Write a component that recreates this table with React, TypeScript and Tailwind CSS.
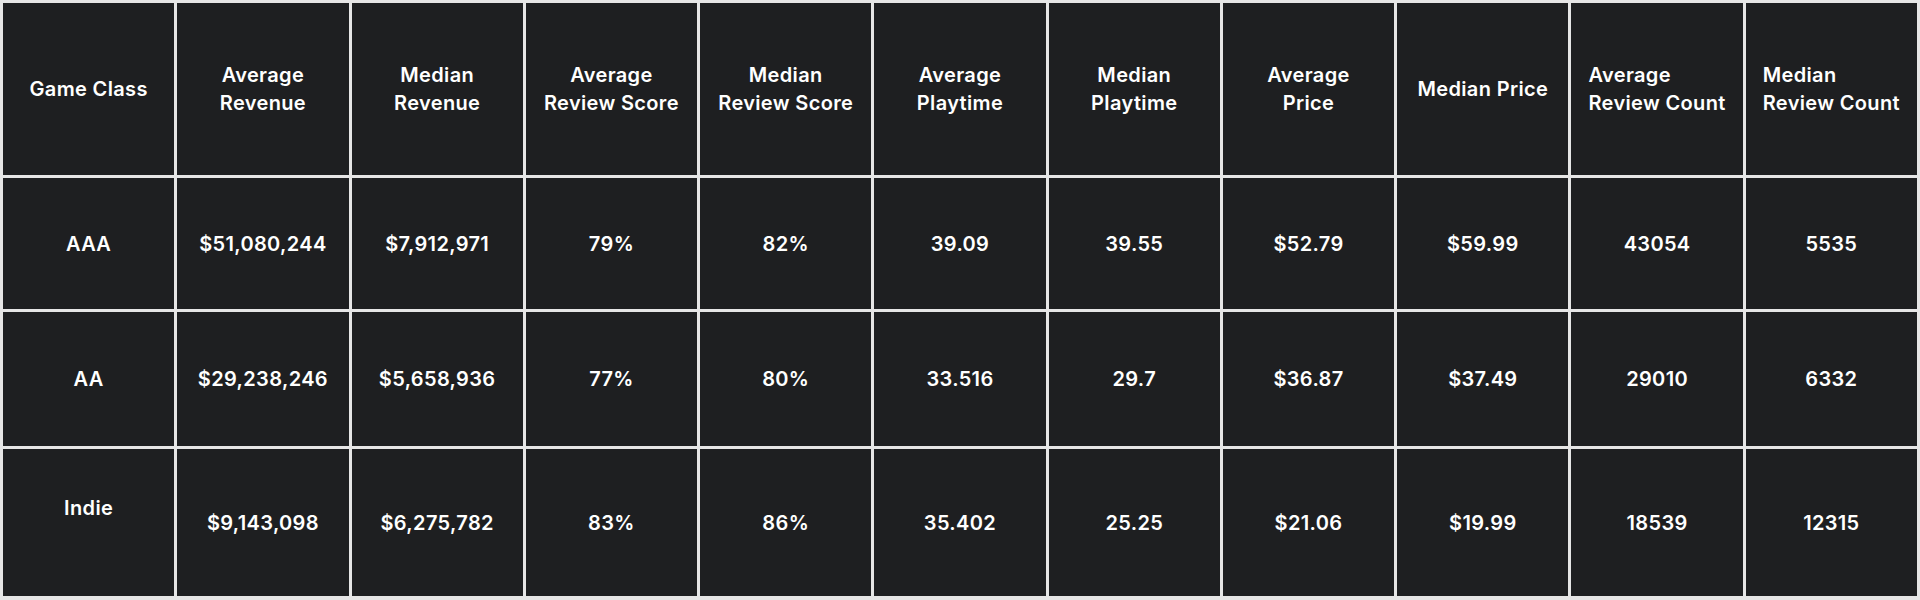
const HEADERS: { label: string; left?: boolean }[] = [
  { label: "Game Class" },
  { label: "Average Revenue" },
  { label: "Median Revenue" },
  { label: "Average Review Score" },
  { label: "Median Review Score" },
  { label: "Average Playtime" },
  { label: "Median Playtime" },
  { label: "Average Price" },
  { label: "Median Price" },
  { label: "Average Review Count", left: true },
  { label: "Median Review Count", left: true },
];

const ROWS: string[][] = [
  ["AAA", "$51,080,244", "$7,912,971", "79%", "82%", "39.09", "39.55", "$52.79", "$59.99", "43054", "5535"],
  ["AA", "$29,238,246", "$5,658,936", "77%", "80%", "33.516", "29.7", "$36.87", "$37.49", "29010", "6332"],
  ["Indie", "$9,143,098", "$6,275,782", "83%", "86%", "35.402", "25.25", "$21.06", "$19.99", "18539", "12315"],
];

// two-line headers break after the first word
function headerLines(label: string) {
  const [first, ...rest] = label.split(" ");
  if (label === "Game Class" || label === "Median Price") return [label];
  return [first, rest.join(" ")];
}

export default function App() {
  return (
    <div
      className="w-[1920px] h-[600px] bg-[#e6e6e6] p-[3px] grid grid-cols-11 grid-rows-[172px_131px_134px_147px] gap-[3px] text-white font-semibold text-[20px] leading-[28px] tracking-[0.35px]"
      style={{ fontFamily: "Inter, 'Liberation Sans', sans-serif" }}
    >
      {HEADERS.map((h) => (
        <div
          key={h.label}
          className={
            h.left
              ? "bg-[#1e1f21] flex items-center justify-start pl-[17px]"
              : "bg-[#1e1f21] flex items-center justify-center text-center"
          }
        >
          <div className={h.left ? "text-left" : "text-center"}>
            {headerLines(h.label).map((line) => (
              <div key={line} className="whitespace-nowrap">
                {line}
              </div>
            ))}
          </div>
        </div>
      ))}
      {ROWS.map((row, ri) =>
        row.map((cell, ci) => (
          <div
            key={`${ri}-${ci}`}
            className={
              ri === 2 && ci === 0
                ? "bg-[#1e1f21] flex items-center justify-center pb-[29px]"
                : "bg-[#1e1f21] flex items-center justify-center"
            }
          >
            {cell}
          </div>
        ))
      )}
    </div>
  );
}
